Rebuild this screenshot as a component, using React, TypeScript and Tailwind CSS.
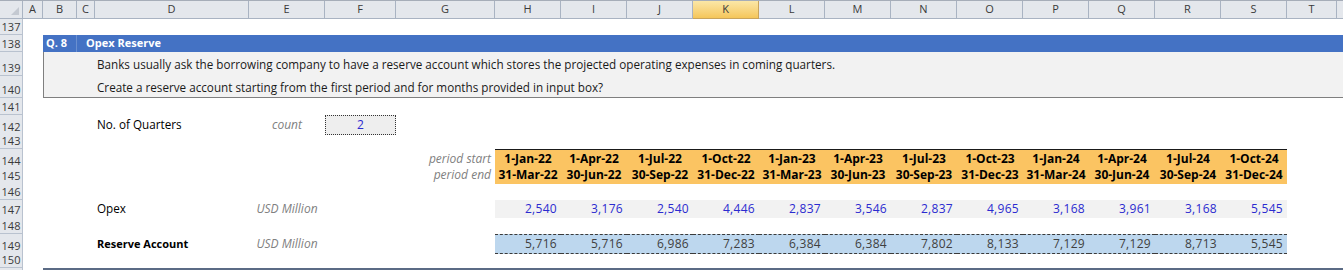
import React from "react";

const GRID =
    "grid grid-cols-[23px_20px_34px_18px_154px_76px_71px_99px_repeat(12,66px)_50px_1fr]";

const starts = ["1-Jan-22", "1-Apr-22", "1-Jul-22", "1-Oct-22", "1-Jan-23", "1-Apr-23", "1-Jul-23", "1-Oct-23", "1-Jan-24", "1-Apr-24", "1-Jul-24", "1-Oct-24"];
const ends = ["31-Mar-22", "30-Jun-22", "30-Sep-22", "31-Dec-22", "31-Mar-23", "30-Jun-23", "30-Sep-23", "31-Dec-23", "31-Mar-24", "30-Jun-24", "30-Sep-24", "31-Dec-24"];
const opex = [2540, 3176, 2540, 4446, 2837, 3546, 2837, 4965, 3168, 3961, 3168, 5545];
const reserve = [5716, 5716, 6986, 7283, 6384, 6384, 7802, 8133, 7129, 7129, 8713, 5545];

const letters = ["A", "B", "C", "D", "E", "F", "G", "H", "I", "J", "K", "L", "M", "N", "O", "P", "Q", "R", "S", "T"];

const fmt = (n: number) => n.toLocaleString("en-US");

interface RowProps {
    num: number;
    h: string;
    children?: React.ReactNode;
}

function Row({ num, h, children }: RowProps) {
    return (
        <div className={`${GRID} ${h}`}>
            <div className="col-[1/2] row-[1] flex items-end justify-center bg-[#e4e7ec] border-r border-b border-[#b9c2cf] text-[11px] leading-[15px] text-[#3a3a3a]">
                {num}
            </div>
            {children}
        </div>
    );
}

export default function App() {
    return (
        <div className="w-[1343px] h-[270px] overflow-hidden bg-white font-['Open_Sans',sans-serif] text-[11.7px] text-black">
            {/* column headers */}
            <div className={`${GRID} h-[17px] border-t border-[#a6adb8]`}>
                <div className="relative bg-[#e4e7ec] border-r border-b border-[#a9b3c2]">
                    <div className="absolute right-[3px] bottom-[3px] w-0 h-0 border-l-[8px] border-l-transparent border-b-[8px] border-b-[#c4c9d1]" />
                </div>
                {letters.map((l) => (
                    <div
                        key={l}
                        className={`flex items-center justify-center border-r border-b text-[11px] text-[#3a3a3a] ${
                            l === "K"
                                ? "bg-linear-to-b from-[#fbe7a6] to-[#f5c659] border-[#c9a45c]"
                                : "bg-[#e4e7ec] border-[#a9b3c2]"
                        }`}
                    >
                        {l}
                    </div>
                ))}
                <div className="bg-[#e4e7ec] border-b border-[#a9b3c2]" />
            </div>

            <Row num={137} h="h-[18px]" />

            <Row num={138} h="h-[17px]">
                <div className="col-[3/4] flex items-center pl-[3px] bg-[#4472c4] border-r border-[#6a8fd0] text-[11px] font-bold text-white">
                    Q. 8
                </div>
                <div className="col-[4/-1] flex items-center pl-[9px] bg-[#4472c4] text-[11px] font-bold text-white">
                    Opex Reserve
                </div>
            </Row>

            <Row num={139} h="h-[24px]">
                <div className="col-[3/-1] flex items-center pl-[53px] pt-[2px] bg-[#f2f2f2] border-l border-[#7f7f7f] text-[#1a1a1a]">
                    Banks usually ask the borrowing company to have a reserve account which stores the projected operating expenses in coming quarters.
                </div>
            </Row>

            <Row num={140} h="h-[22px]">
                <div className="col-[3/-1] flex items-start pl-[53px] pt-[3px] bg-[#f2f2f2] border-l border-b border-[#7f7f7f] text-[#1a1a1a]">
                    Create a reserve account starting from the first period and for months provided in input box?
                </div>
            </Row>

            <Row num={141} h="h-[17px]" />

            <Row num={142} h="h-[17px]">
                <div className="col-[5/6] flex items-center pl-[2px]">No. of Quarters</div>
                <div className="col-[6/7] flex items-center justify-center italic text-[12px] text-[#808080]">count</div>
                <div className="col-[7/8] flex items-center justify-center bg-[#eeeeee] border border-dotted border-[#333] text-[12px] text-[#2b2bd0]">
                    2
                </div>
            </Row>

            <Row num={143} h="h-[17px]" />

            <Row num={144} h="h-[17px]">
                <div className="col-[8/9] flex items-center justify-end pr-[4px] italic text-[12px] text-[#808080]">period start</div>
                {starts.map((d) => (
                    <div
                        key={d}
                        className="flex items-center justify-center bg-[#fbc462] border-t border-b border-t-[#1a1a1a] border-b-[#e2a94a] text-[12px] font-bold whitespace-nowrap"
                    >
                        {d}
                    </div>
                ))}
            </Row>

            <Row num={145} h="h-[17px]">
                <div className="col-[8/9] flex items-center justify-end pr-[4px] italic text-[12px] text-[#808080]">period end</div>
                {ends.map((d) => (
                    <div
                        key={d}
                        className="flex items-center justify-center bg-[#fbc462] text-[12px] font-bold whitespace-nowrap"
                    >
                        {d}
                    </div>
                ))}
            </Row>

            <Row num={146} h="h-[17px]" />

            <Row num={147} h="h-[17px]">
                <div className="col-[5/6] flex items-center pl-[2px]">Opex</div>
                <div className="col-[6/7] flex items-center justify-center italic text-[12px] text-[#808080]">USD Million</div>
                {opex.map((v, i) => (
                    <div
                        key={i}
                        className={`${i === 0 ? "col-start-9" : ""} flex items-center justify-end pr-[4px] bg-[#f2f2f2] text-[12px] tracking-[0.3px] text-[#2b2bd0]`}
                    >
                        {fmt(v)}
                    </div>
                ))}
            </Row>

            <Row num={148} h="h-[17px]" />

            <Row num={149} h="h-[17px]">
                <div className="col-[5/6] flex items-center pl-[2px] text-[11px] font-bold">Reserve Account</div>
                <div className="col-[6/7] flex items-center justify-center italic text-[12px] text-[#808080]">USD Million</div>
                {reserve.map((v, i) => (
                    <div
                        key={i}
                        className={`${i === 0 ? "col-start-9" : ""} flex items-center justify-end pr-[4px] bg-[#bdd7ee] border-y border-dashed border-[#3a3a3a] text-[12px] tracking-[0.3px] text-[#404040]`}
                    >
                        {fmt(v)}
                    </div>
                ))}
            </Row>

            <Row num={150} h="h-[17px]" />

            <div className={`${GRID} h-[3px]`}>
                <div className="bg-[#e4e7ec] border-r border-[#b9c2cf]" />
                <div className="col-[3/-1] bg-[#5b6b85]" />
            </div>
        </div>
    );
}
